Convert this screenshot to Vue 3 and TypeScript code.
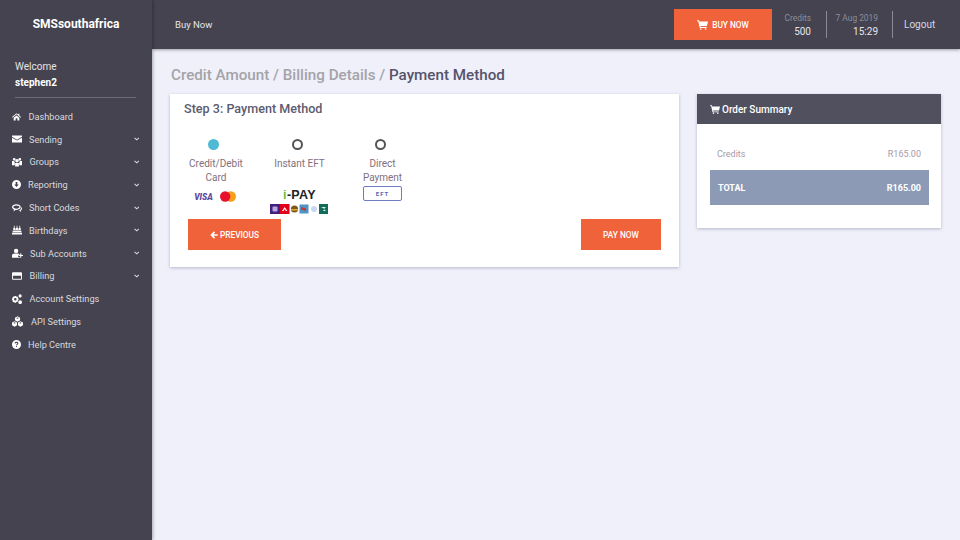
<template>
  <div class="app">
    <aside class="sidebar">
      <div class="brand">SMSsouthafrica</div>
      <div class="welcome">
        <div class="welcome-label">Welcome</div>
        <div class="welcome-name">stephen2</div>
      </div>
      <nav class="nav">
        <div v-for="item in navItems" :key="item.label" class="nav-item">
          <svg class="nav-icon" viewBox="0 0 16 16" :style="{ width: item.size + 'px' }">
            <path :d="item.icon" fill="#fff" fill-rule="evenodd" />
          </svg>
          <span class="nav-label" :style="{ marginLeft: item.gap + 'px' }">{{ item.label }}</span>
          <svg v-if="item.sub" class="chevron" viewBox="0 0 10 6">
            <path d="M1 1l4 3.6L9 1" fill="none" stroke="#d8d8de" stroke-width="2" />
          </svg>
        </div>
      </nav>
    </aside>

    <div class="main">
      <header class="topbar">
        <div class="topbar-link">Buy Now</div>
        <div class="topbar-right">
          <button class="buy-btn">
            <svg class="cart" viewBox="0 0 16 14"><path :d="cartPath" fill="#fff" /></svg>
            BUY NOW
          </button>
          <div class="stat credits">
            <div class="stat-label">Credits</div>
            <div class="stat-value">500</div>
          </div>
          <div class="stat date">
            <div class="stat-label">7 Aug 2019</div>
            <div class="stat-value">15:29</div>
          </div>
          <div class="logout">Logout</div>
        </div>
      </header>

      <main class="content">
        <h1 class="crumbs">
          Credit Amount / Billing Details / <span class="crumb-current">Payment Method</span>
        </h1>
        <div class="columns">
          <section class="card pay-card">
            <h2 class="step-title">Step 3: Payment Method</h2>
            <div class="options">
              <div class="option card-option">
                <span class="radio selected"></span>
                <div class="option-label">Credit/Debit Card</div>
                <div class="card-logos">
                  <span class="visa">VISA</span>
                  <svg class="mastercard" viewBox="0 0 17 11">
                    <circle cx="11.5" cy="5.5" r="5.5" fill="#f79e1b" />
                    <circle cx="5.5" cy="5.5" r="5.5" fill="#e8112d" />
                  </svg>
                </div>
              </div>
              <div class="option eft-option">
                <span class="radio"></span>
                <div class="option-label">Instant EFT</div>
                <div class="ipay"><span class="ipay-i">i</span>-PAY</div>
                <svg class="banks" viewBox="0 0 58 10">
                  <rect x="0" width="10" height="10" fill="#40217f" />
                  <rect x="2.5" y="2.5" width="5" height="5" rx="1" fill="#b9a6e0" />
                  <rect x="10" width="9.5" height="10" fill="#e2001a" />
                  <path d="M12 7l2.700-4 2.700 4h-1.500l-1.200-2-1.200 2z" fill="#fff" />
                  <circle cx="24.5" cy="5" r="3.6" fill="#7a5a1c" />
                  <path d="M21 5h7v1.500h-7z" fill="#e6a52a" />
                  <rect x="29.5" y="0.5" width="9" height="9" fill="#4f93c4" />
                  <path d="M31 3l5 1.500V7l-5-1.500z" fill="#c8372d" />
                  <circle cx="44" cy="5" r="3" fill="#c9d8f0" />
                  <rect x="49" width="9" height="10" fill="#136b5a" />
                  <path d="M51 3h5l-2 2 2 2h-3l1.500-2z" fill="#d8ece4" />
                </svg>
              </div>
              <div class="option direct-option">
                <span class="radio"></span>
                <div class="option-label">Direct Payment</div>
                <div class="eft-badge">EFT</div>
              </div>
            </div>
            <div class="actions">
              <button class="action-btn prev">
                <svg class="arrow" viewBox="0 0 12 12">
                  <path d="M6 .5L.5 6 6 11.500l1.600-1.600L5.200 7.300H11.500V4.700H5.200l2.400-2.600z" fill="#fff" />
                </svg>
                PREVIOUS
              </button>
              <button class="action-btn next">PAY NOW</button>
            </div>
          </section>

          <section class="card summary-card">
            <div class="summary-head">
              <svg class="cart small" viewBox="0 0 16 14"><path :d="cartPath" fill="#fff" /></svg>
              Order Summary
            </div>
            <div class="summary-body">
              <div class="summary-row">
                <span>Credits</span><span>R165.00</span>
              </div>
              <div class="summary-row total">
                <span>TOTAL</span><span>R165.00</span>
              </div>
            </div>
          </section>
        </div>
      </main>
    </div>
  </div>
</template>

<script setup lang="ts">
interface NavItem {
  label: string
  icon: string
  size: number
  gap: number
  sub: boolean
}

const cartPath =
  'M0 0h3l.5 2H16l-1.6 6.5H5l.3 1.5H14v1.4H4L1.8 1.4H0zM5.5 11.6a1.2 1.2 0 1 1 0 2.4 1.2 1.2 0 0 1 0-2.4zM12.5 11.6a1.2 1.2 0 1 1 0 2.4 1.2 1.2 0 0 1 0-2.4z'

const navItems: NavItem[] = [
  { label: 'Dashboard', size: 9, gap: 7.5, sub: false, icon: 'M8 2L0 9l1 1 7-6 7 6 1-1-3-2.6V3h-2v1.7zM3 10.2L8 6l5 4.2V15H9.5v-4h-3v4H3z' },
  { label: 'Sending', size: 10, gap: 7, sub: true, icon: 'M0 2.500h16v1.800L8 9 0 4.300zM0 6l8 4.500L16 6v7.500H0z' },
  { label: 'Groups', size: 10, gap: 7.5, sub: true, icon: 'M3.500 1.500a2.200 2.200 0 1 1 0 4.400 2.200 2.200 0 0 1 0-4.400zM12.500 1.500a2.200 2.200 0 1 1 0 4.400 2.200 2.200 0 0 1 0-4.400zM8 3a2.800 2.800 0 1 1 0 5.600A2.800 2.800 0 0 1 8 3zM0 6.500h3.500L4.500 9v4H0zM12.500 6.500H16V13h-4.500V9zM5 9.500h6V15H5z' },
  { label: 'Reporting', size: 9, gap: 7, sub: true, icon: 'M8 0a8 8 0 1 1 0 16A8 8 0 0 1 8 0zM6.500 3.500V8H4l4 4.500L12 8H9.500V3.500z' },
  { label: 'Short Codes', size: 10, gap: 7, sub: true, icon: 'M7 2c3.800 0 7 2 7 4.500S10.800 11 7 11H5.500L2.500 13.500l.6-3.200C1.200 9.400 0 8 0 6.500 0 4 3 2 7 2zM7 4C4 4 2 5.200 2 6.500S4 9 7 9s5-1.200 5-2.500S10 4 7 4zM14.500 6.500C15.500 7.300 16 8.200 16 9.200c0 1.200-.9 2.200-2 2.800l.5 2L11 12.500c2-.3 3.800-3 3.500-6z' },
  { label: 'Birthdays', size: 10, gap: 7, sub: true, icon: 'M3 1h1.200v3H3zM7.400 1h1.200v3H7.400zM11.800 1H13v3h-1.200zM2 4.500h3V7h1V4.500h4V7h1V4.500h3V8.200H2zM1 9h14v2.500H1zM0 12.500h16V15H0z' },
  { label: 'Sub Accounts', size: 11, gap: 7, sub: true, icon: 'M6 1a3.200 3.200 0 1 1 0 6.400A3.200 3.200 0 0 1 6 1zM0 14v-3C0 9.200 1.800 8 3.500 8h5c.9 0 1.700.4 2.300 1v1.500H9V13h2v1zM12 7.500h1.500V10H16v1.500h-2.500V14H12v-2.500H9.800V10H12z' },
  { label: 'Billing', size: 10, gap: 7.5, sub: true, icon: 'M1.500 2h13A1.500 1.500 0 0 1 16 3.500v9a1.500 1.500 0 0 1-1.500 1.500h-13A1.500 1.500 0 0 1 0 12.500v-9A1.500 1.500 0 0 1 1.500 2zM1.500 7.500v5h13v-5z' },
  { label: 'Account Settings', size: 10, gap: 7.5, sub: false, icon: 'M4 3h2.500l.4 1.400 1.400-.6 1.500 1.500-.6 1.400 1.300.4V9.500l-1.300.4.6 1.400-1.500 1.500-1.400-.6L6.500 14H4l-.4-1.400-1.400.6L.7 11.700l.6-1.400L0 9.500V7.100l1.300-.4-.6-1.400 1.500-1.500 1.400.6zM5.200 6.500a2 2 0 1 0 0 4 2 2 0 0 0 0-4zM13 .5a2.500 2.500 0 1 1 0 5 2.500 2.500 0 0 1 0-5zM13 10a3 3 0 1 1 0 6 3 3 0 0 1 0-6z' },
  { label: 'API Settings', size: 11, gap: 8, sub: false, icon: 'M8 .5l3.700 2v3.800L8 8.300l-3.700-2V2.500zM3.800 7.500l3.500 2V13.500l-3.500 2-3.800-2V9.500zM12.200 7.500l3.800 2V13.500l-3.800 2-3.500-2V9.500zM8 2L6 3l2 1 2-1zM3.800 9L2 10l1.800 1 1.800-1zM12.200 9l-1.800 1 1.800 1 1.800-1z' },
  { label: 'Help Centre', size: 9, gap: 7, sub: false, icon: 'M8 0a8 8 0 1 1 0 16A8 8 0 0 1 8 0zM8 3C6 3 4.700 4 4.500 5.800l2 .3C6.700 5.300 7.200 5 8 5c.7 0 1.200.4 1.200 1 0 1.200-2.200 1.300-2.200 3.500h2c0-1.300 2.300-1.500 2.300-3.700C11.300 4.200 10 3 8 3zM7 10.500v2h2v-2z' },
]
</script>

<style>
html,
body {
  margin: 0;
  background: #f0f0fb;
}
</style>

<style scoped>
.app {
  display: flex;
  width: 960px;
  height: 540px;
  overflow: hidden;
  font-family: Roboto, "Liberation Sans", sans-serif;
  background: #f0f0fb;
}

.sidebar {
  flex: none;
  width: 152px;
  background: #44434f;
  box-shadow: 1px 0 3px rgba(0, 0, 0, 0.3);
  z-index: 2;
}

.brand {
  padding-top: 17px;
  height: 33px;
  text-align: center;
  color: #fff;
  font-size: 12px;
  font-weight: 700;
  line-height: 15px;
}

.welcome {
  margin: 9px 16px 0 15px;
  padding-bottom: 7px;
  border-bottom: 1px solid #6b6a7b;
  color: #fff;
  font-size: 10px;
  line-height: 15.5px;
}

.welcome-label {
  color: #e4e4ea;
}

.welcome-name {
  font-weight: 700;
}

.nav {
  padding-top: 7px;
}

.nav-item {
  display: flex;
  align-items: center;
  height: 22.8px;
  padding: 0 13px 0 12px;
  color: #d9d9df;
  font-size: 9.2px;
}

.nav-icon {
  flex: none;
  display: block;
}

.nav-label {
  flex: 1;
}

.chevron {
  flex: none;
  width: 5.5px;
  height: 4px;
}

.main {
  flex: 1;
  min-width: 0;
  display: flex;
  flex-direction: column;
}

.topbar {
  flex: none;
  height: 49px;
  display: flex;
  align-items: center;
  justify-content: space-between;
  padding-left: 23px;
  background: #44434f;
  box-shadow: 0 1px 3px rgba(0, 0, 0, 0.35);
}

.topbar-link {
  color: #e6e6ec;
  font-size: 9.5px;
}

.topbar-right {
  display: flex;
  align-items: center;
}

.buy-btn {
  display: flex;
  align-items: center;
  justify-content: center;
  width: 98px;
  height: 31px;
  border: 0;
  background: #f0623a;
  color: #fff;
  font: 500 8.3px Roboto, sans-serif;
}

.cart {
  width: 11px;
  height: 10px;
  margin-right: 4px;
}

.cart.small {
  width: 10px;
  height: 9px;
  margin-right: 2px;
}

.stat {
  height: 27px;
  text-align: right;
}

.credits {
  width: 39px;
  padding-right: 15px;
  border-right: 1px solid #8b8b93;
}

.date {
  width: 51px;
  padding-right: 14px;
  border-right: 1px solid #8b8b93;
}

.stat-label {
  color: #8d8d97;
  font-size: 8.4px;
  line-height: 14px;
}

.stat-value {
  color: #e6e6ec;
  font-size: 10px;
  line-height: 14px;
}

.logout {
  width: 67px;
  padding-left: 11px;
  box-sizing: border-box;
  color: #d8d8e2;
  font-size: 10px;
}

.content {
  flex: 1;
  padding: 17px 19px 0 18px;
}

.crumbs {
  margin: 0;
  height: 28px;
  padding-left: 1px;
  color: #a3a3a8;
  font-size: 15.2px;
  font-weight: 500;
  line-height: 18px;
}

.crumb-current {
  color: #55546a;
}

.columns {
  display: flex;
  align-items: flex-start;
  gap: 18px;
}

.card {
  background: #fff;
  box-shadow: 0 1px 3px rgba(70, 70, 110, 0.35);
}

.pay-card {
  width: 509px;
  height: 173px;
  padding: 8px 18px 0 14px;
  box-sizing: border-box;
}

.step-title {
  margin: 0;
  color: #5c5b70;
  font-size: 12.6px;
  font-weight: 500;
  line-height: 13px;
}

.options {
  display: flex;
  height: 80px;
  margin-top: 24px;
}

.option {
  display: flex;
  flex-direction: column;
  align-items: center;
  text-align: center;
}

.card-option {
  width: 64px;
}

.eft-option {
  width: 60px;
  margin-left: 21.5px;
}

.direct-option {
  width: 42px;
  margin-left: 32px;
}

.radio {
  flex: none;
  width: 7px;
  height: 7px;
  margin-right: 5px;
  border: 2px solid #555;
  border-radius: 50%;
}

.radio.selected {
  border-color: #4fbad3;
  background: #4fbad3;
}

.option-label {
  margin-top: 7px;
  color: #7f6f80;
  font-size: 10px;
  line-height: 14px;
}

.card-logos {
  display: flex;
  align-items: center;
  gap: 7px;
  margin-top: 6px;
  margin-right: 2px;
}

.visa {
  color: #5b4a9e;
  font-size: 8.5px;
  font-weight: 900;
  font-style: italic;
}

.mastercard {
  width: 16px;
  height: 11px;
}

.ipay {
  margin-top: 18px;
  color: #222;
  font: 700 12.5px/13px "Liberation Sans", sans-serif;
  letter-spacing: 0.3px;
}

.ipay-i {
  color: #6cbf3a;
}

.banks {
  flex: none;
  width: 58px;
  height: 10px;
  margin-top: 2px;
  margin-right: 1px;
}

.eft-badge {
  width: 37px;
  height: 13px;
  margin-top: 1px;
  border: 1px solid #6f7cc0;
  border-radius: 2px;
  color: #5a68b0;
  font-size: 6px;
  font-weight: 700;
  letter-spacing: 1px;
  line-height: 13px;
}

.actions {
  display: flex;
  justify-content: space-between;
  padding-left: 4px;
}

.action-btn {
  display: flex;
  align-items: center;
  justify-content: center;
  height: 31px;
  border: 0;
  background: #f0623a;
  color: #fff;
  font: 500 8.3px Roboto, sans-serif;
}

.prev {
  width: 93px;
}

.next {
  width: 80px;
}

.arrow {
  width: 8px;
  height: 8px;
  margin-right: 2px;
}

.summary-card {
  width: 244px;
  height: 134px;
}

.summary-head {
  display: flex;
  align-items: center;
  height: 30px;
  padding-left: 13px;
  background: #50505f;
  color: #fff;
  font-size: 10px;
  font-weight: 500;
}

.summary-body {
  padding: 16px 12px 0 13px;
}

.summary-row {
  display: flex;
  justify-content: space-between;
  height: 30px;
  padding: 0 8px 0 7px;
  color: #a898a8;
  font-size: 9px;
  line-height: 29px;
}

.summary-row.total {
  height: 35px;
  padding: 0 8px;
  background: #8c9ab5;
  color: #fff;
  font-weight: 700;
  line-height: 37px;
}
</style>
